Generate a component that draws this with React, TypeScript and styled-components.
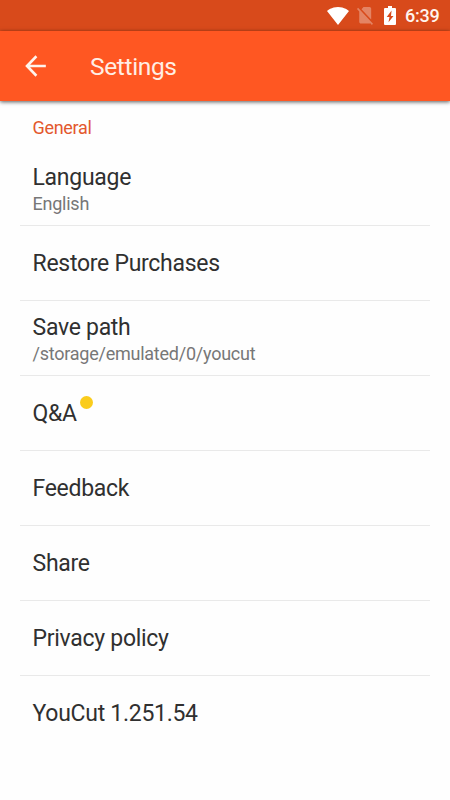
import React from 'react';
import styled, { createGlobalStyle } from 'styled-components';

const GlobalStyle = createGlobalStyle`
  * { box-sizing: border-box; }
  body { margin: 0; background: #fefefe; font-family: Roboto, sans-serif; }
`;

const Screen = styled.main`
  width: 450px;
  height: 800px;
  overflow: hidden;
  background: #fefefe;
`;

const StatusBar = styled.div`
  height: 31px;
  display: flex;
  align-items: center;
  justify-content: flex-end;
  padding: 1px 10px 0 0;
  background: #d84a1b;
  color: #fff4ee;
`;

const StatusIcon = styled.svg<{ $gap: number; $faded?: boolean }>`
  display: block;
  flex: none;
  fill: #fff;
  margin-right: ${(p) => p.$gap}px;
  margin-bottom: 1px;
  opacity: ${(p) => (p.$faded ? 0.32 : 1)};
`;

const Clock = styled.time`
  width: 35px;
  font-size: 18px;
  font-weight: 500;
  line-height: 30px;
  letter-spacing: -0.25px;
  white-space: nowrap;
`;

const AppBar = styled.header`
  height: 70px;
  display: flex;
  align-items: center;
  padding-left: 20px;
  background: #ff5722;
  box-shadow: 0 1px 4px rgba(0, 0, 0, 0.65);
`;

const BackButton = styled.button`
  width: 31px;
  height: 32px;
  padding: 0;
  border: 0;
  background: none;
  svg { display: block; fill: #fff4ec; }
`;

const Title = styled.h1`
  margin: 2px 0 0 39px;
  color: #ffeee4;
  font-size: 24.5px;
  font-weight: 400;
  line-height: 30px;
  letter-spacing: -0.35px;
`;

const List = styled.section`
  padding: 0 20px;
`;

const SectionTitle = styled.h2`
  height: 50px;
  margin: 0;
  padding: 16px 0 0 12.5px;
  color: #e3582e;
  font-size: 18px;
  font-weight: 400;
  line-height: 22px;
  letter-spacing: -0.32px;
`;

const Row = styled.div`
  height: 75px;
  display: flex;
  flex-direction: column;
  justify-content: center;
  padding: 1px 0 0 12.5px;
  border-bottom: 1px solid #e9e9e9;
  &:last-child { border-bottom-color: transparent; }
`;

const Label = styled.div`
  display: flex;
  color: #303030;
  font-size: 23px;
  line-height: 27px;
  letter-spacing: -0.28px;
  white-space: nowrap;
`;

const Detail = styled.div`
  margin-bottom: -2px;
  color: #777;
  font-size: 18px;
  line-height: 25px;
  letter-spacing: -0.24px;
`;

const Dot = styled.span`
  width: 13px;
  height: 13px;
  margin: -4px 0 0 3.5px;
  border-radius: 50%;
  background: #facc1c;
`;

interface Item {
  label: string;
  detail?: string;
  dot?: boolean;
}

const items: Item[] = [
  { label: 'Language', detail: 'English' },
  { label: 'Restore Purchases' },
  { label: 'Save path', detail: '/storage/emulated/0/youcut' },
  { label: 'Q&A', dot: true },
  { label: 'Feedback' },
  { label: 'Share' },
  { label: 'Privacy policy' },
  { label: 'YouCut 1.251.54' },
];

export default function App() {
  return (
    <Screen>
      <GlobalStyle />
      <StatusBar>
        <StatusIcon $gap={8} width="22" height="18" viewBox="0.36 3 23.28 18.5" preserveAspectRatio="none">
          <path d="M12 21.5 23.64 7C23.19 6.66 18.71 3 12 3S.81 6.66.36 7z" />
        </StatusIcon>
        <StatusIcon $gap={11} $faded width="16" height="18" viewBox="2.38 3 18.74 19.62" preserveAspectRatio="none">
          <path d="M18.99 5c0-1.1-.89-2-1.99-2h-7L7.66 5.34 19 16.68zM3.65 3.88 2.38 5.15 5 7.77V19c0 1.1.9 2 2 2h10.01c.35 0 .67-.1.96-.26l1.88 1.88 1.27-1.27z" />
        </StatusIcon>
        <StatusIcon $gap={9} width="12" height="19" viewBox="0 0 12 19">
          <path
            fillRule="evenodd"
            d="M4 0h4v2h3a1 1 0 0 1 1 1v15a1 1 0 0 1-1 1H1a1 1 0 0 1-1-1V3a1 1 0 0 1 1-1h3zM7.6 4.6 2.7 11h2.8l-1 5.2L9.5 10H7z"
          />
        </StatusIcon>
        <Clock>6:39</Clock>
      </StatusBar>
      <AppBar>
        <BackButton aria-label="Back">
          <svg width="31" height="32" viewBox="0 0 24 24" preserveAspectRatio="none">
            <path d="M20 11H7.83l5.59-5.59L12 4l-8 8 8 8 1.41-1.41L7.83 13H20z" />
          </svg>
        </BackButton>
        <Title>Settings</Title>
      </AppBar>
      <List>
        <SectionTitle>General</SectionTitle>
        {items.map((item) => (
          <Row key={item.label}>
            <Label>
              {item.label}
              {item.dot && <Dot />}
            </Label>
            {item.detail && <Detail>{item.detail}</Detail>}
          </Row>
        ))}
      </List>
    </Screen>
  );
}
